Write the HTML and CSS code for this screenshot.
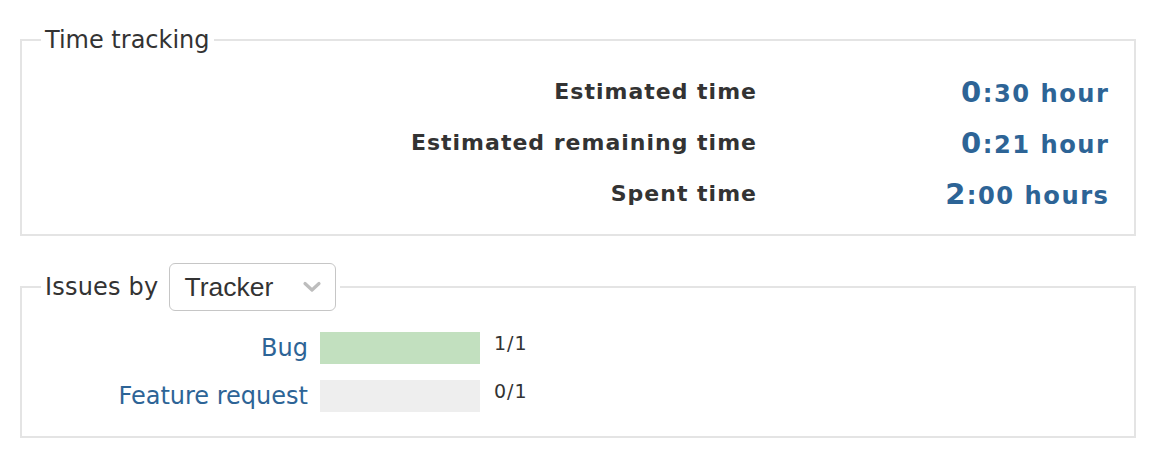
FILE: index.html
```html
<!DOCTYPE html>
<html>
<head>
<meta charset="utf-8">
<link rel="stylesheet" href="styles.css">
</head>
<body>
<div class="page">
  <fieldset class="box time-tracking">
    <legend class="legend">Time tracking</legend>
    <div class="tt-grid">
      <div class="tt-label">Estimated time</div>
      <div class="tt-value"><span class="hours-int">0</span>:30 hour</div>
      <div class="tt-label">Estimated remaining time</div>
      <div class="tt-value"><span class="hours-int">0</span>:21 hour</div>
      <div class="tt-label">Spent time</div>
      <div class="tt-value"><span class="hours-int">2</span>:00 hours</div>
    </div>
  </fieldset>

  <fieldset class="box issues-by">
    <legend class="legend legend-select">
      <span>Issues by</span>
      <span class="select">
        <span class="select-text">Tracker</span>
        <svg class="chevron" width="20" height="12" viewBox="0 0 20 12"><path d="M3 2.5 L10 9 L17 2.5" fill="none" stroke="#bdbdbd" stroke-width="3.2" stroke-linecap="round" stroke-linejoin="round"/></svg>
      </span>
    </legend>
    <div class="ib-grid">
      <a class="ib-label" href="#">Bug</a>
      <div class="bar"><div class="bar-fill" style="width:100%"></div></div>
      <div class="ib-count">1/1</div>
      <a class="ib-label" href="#">Feature request</a>
      <div class="bar"><div class="bar-fill" style="width:0%"></div></div>
      <div class="ib-count">0/1</div>
    </div>
  </fieldset>
</div>
</body>
</html>
```

FILE: styles.css
```css
html, body {
  margin: 0;
  padding: 0;
  background: #fff;
}
body {
  font-family: "DejaVu Sans", Verdana, sans-serif;
  color: #333;
}
.page {
  padding: 27px 18px 0 20px;
}
.box {
  margin: 0;
  padding: 0;
  border: 2px solid #e4e4e4;
  min-width: 0;
}
.legend {
  margin-left: 19px;
  padding: 0 4px;
  font-size: 24px;
  line-height: 26px;
  color: #333;
}
.tt-grid {
  display: grid;
  grid-template-columns: 1fr 352px;
  grid-auto-rows: 51px;
  align-items: center;
  padding: 13px 26px 15px 0;
}
.tt-label {
  text-align: right;
  font-weight: bold;
  font-size: 22px;
  letter-spacing: 1px;
  margin-right: -1px;
  color: #333;
}
.tt-value {
  text-align: right;
  font-weight: bold;
  font-size: 24.2px;
  letter-spacing: 1.5px;
  margin-right: -1.5px;
  color: #2d6496;
}
.hours-int {
  font-size: 29px;
}
.issues-by {
  margin-top: 27px;
}
.legend-select {
  display: flex;
  align-items: center;
  gap: 11px;
  line-height: 28px;
  letter-spacing: 0.2px;
}
.select {
  box-sizing: border-box;
  height: 48px;
  width: 167px;
  border: 1.5px solid #c6c6c6;
  border-radius: 6px;
  display: flex;
  align-items: center;
  justify-content: space-between;
  padding: 0 13px 0 14px;
  background: #fff;
  letter-spacing: 0;
}
.select-text {
  font-family: "Liberation Sans", Arial, sans-serif;
  font-size: 26.5px;
  color: #333;
}
.chevron {
  display: block;
}
.ib-grid {
  display: grid;
  grid-template-columns: 286px 160px auto;
  grid-auto-rows: 32px;
  row-gap: 16px;
  column-gap: 12px;
  align-items: center;
  padding: 21px 0 24px 0;
}
.ib-label {
  text-align: right;
  font-size: 24px;
  color: #2d6496;
  text-decoration: none;
}
.bar {
  height: 32px;
  background: #eeeeee;
}
.bar-fill {
  height: 100%;
  background: #c2e0bf;
}
.ib-count {
  align-self: start;
  margin-left: 2px;
  font-size: 19px;
  letter-spacing: 1px;
  color: #333;
}
```
